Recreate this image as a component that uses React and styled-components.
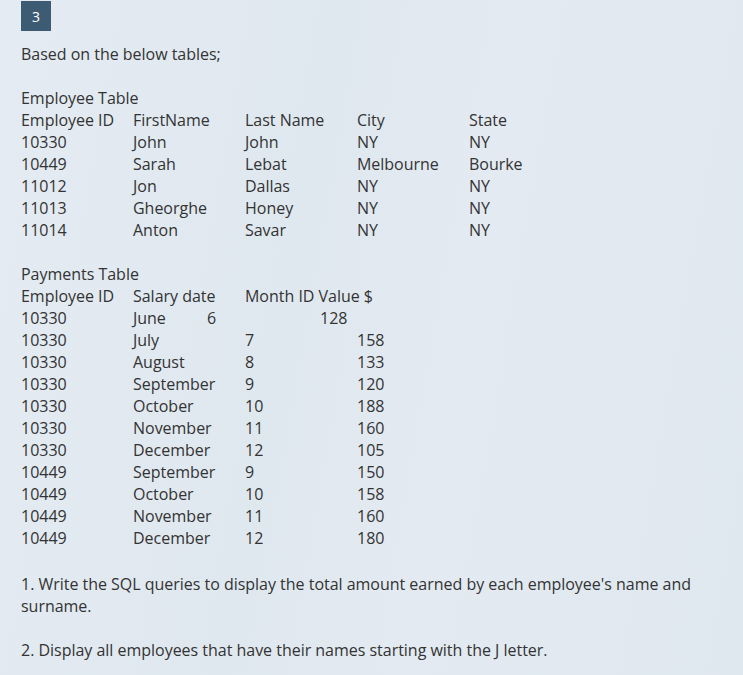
import React from "react";
import styled, { createGlobalStyle } from "styled-components";

const GlobalStyle = createGlobalStyle`
  html, body {
    margin: 0;
    background: #e1e9f0;
  }
  body {
    font-family: "Open Sans", "Noto Sans", sans-serif;
    color: #333;
  }
`;

const Page = styled.div`
  min-height: 675px;
  box-sizing: border-box;
  padding: 1px 21px 0;
  background: linear-gradient(100deg, #e4ebf2 0%, #e0e8ef 40%, #e3eaf1 60%, #e0e8ef 100%);
`;

const Badge = styled.div`
  width: 30px;
  height: 30px;
  background: #3e5b74;
  color: #fff;
  font-size: 14px;
  display: flex;
  align-items: center;
  justify-content: center;
`;

const Body = styled.div`
  margin-top: 12px;
  font-size: 16px;
  line-height: 22px;
  letter-spacing: -0.02px;
  max-width: 700px;
`;

const Line = styled.div`
  min-height: 22px;
`;

const Gap = styled.div`
  height: ${p => p.$h || 22}px;
`;

const Table = styled.div`
  display: grid;
  grid-template-columns: repeat(5, 112px);
  grid-auto-rows: 22px;
`;

const Cell = styled.div`
  white-space: nowrap;
  grid-column: ${p => p.$span || "auto"};
`;

const OddRow = styled.div`
  grid-column: 1 / -1;
  display: flex;
  height: 23px;
`;

const OddPart = styled.span`
  width: ${p => p.$w}px;
  flex: none;
  white-space: nowrap;
`;

const employees = [
  ["Employee ID", "FirstName", "Last Name", "City", "State"],
  ["10330", "John", "John", "NY", "NY"],
  ["10449", "Sarah", "Lebat", "Melbourne", "Bourke"],
  ["11012", "Jon", "Dallas", "NY", "NY"],
  ["11013", "Gheorghe", "Honey", "NY", "NY"],
  ["11014", "Anton", "Savar", "NY", "NY"]
];

const payments = [
  ["10330", "July", "7", "158"],
  ["10330", "August", "8", "133"],
  ["10330", "September", "9", "120"],
  ["10330", "October", "10", "188"],
  ["10330", "November", "11", "160"],
  ["10330", "December", "12", "105"],
  ["10449", "September", "9", "150"],
  ["10449", "October", "10", "158"],
  ["10449", "November", "11", "160"],
  ["10449", "December", "12", "180"]
];

function App() {
  return (
    <Page>
      <GlobalStyle />
      <Badge>3</Badge>
      <Body>
        <Line>Based on the below tables;</Line>
        <Gap />
        <Line>Employee Table</Line>
        <Table>
          {employees.map((row, i) =>
            row.map((c, j) => <Cell key={i + "-" + j}>{c}</Cell>)
          )}
        </Table>
        <Gap />
        <Line>Payments Table</Line>
        <Table>
          <Cell>Employee ID</Cell>
          <Cell>Salary date</Cell>
          <Cell $span="3 / 6">Month ID Value $</Cell>
          <OddRow>
            <OddPart $w={112}>10330</OddPart>
            <OddPart $w={74}>June</OddPart>
            <OddPart $w={113}>6</OddPart>
            <OddPart $w={40}>128</OddPart>
          </OddRow>
          {payments.map((row, i) => (
            <React.Fragment key={i}>
              <Cell>{row[0]}</Cell>
              <Cell>{row[1]}</Cell>
              <Cell>{row[2]}</Cell>
              <Cell $span="4 / 6">{row[3]}</Cell>
            </React.Fragment>
          ))}
        </Table>
        <Gap $h={24} />
        <Line>
          1. Write the SQL queries to display the total amount earned by each
          employee's name and surname.
        </Line>
        <Gap />
        <Line>2. Display all employees that have their names starting with the J letter.</Line>
      </Body>
    </Page>
  );
}

export default App;
